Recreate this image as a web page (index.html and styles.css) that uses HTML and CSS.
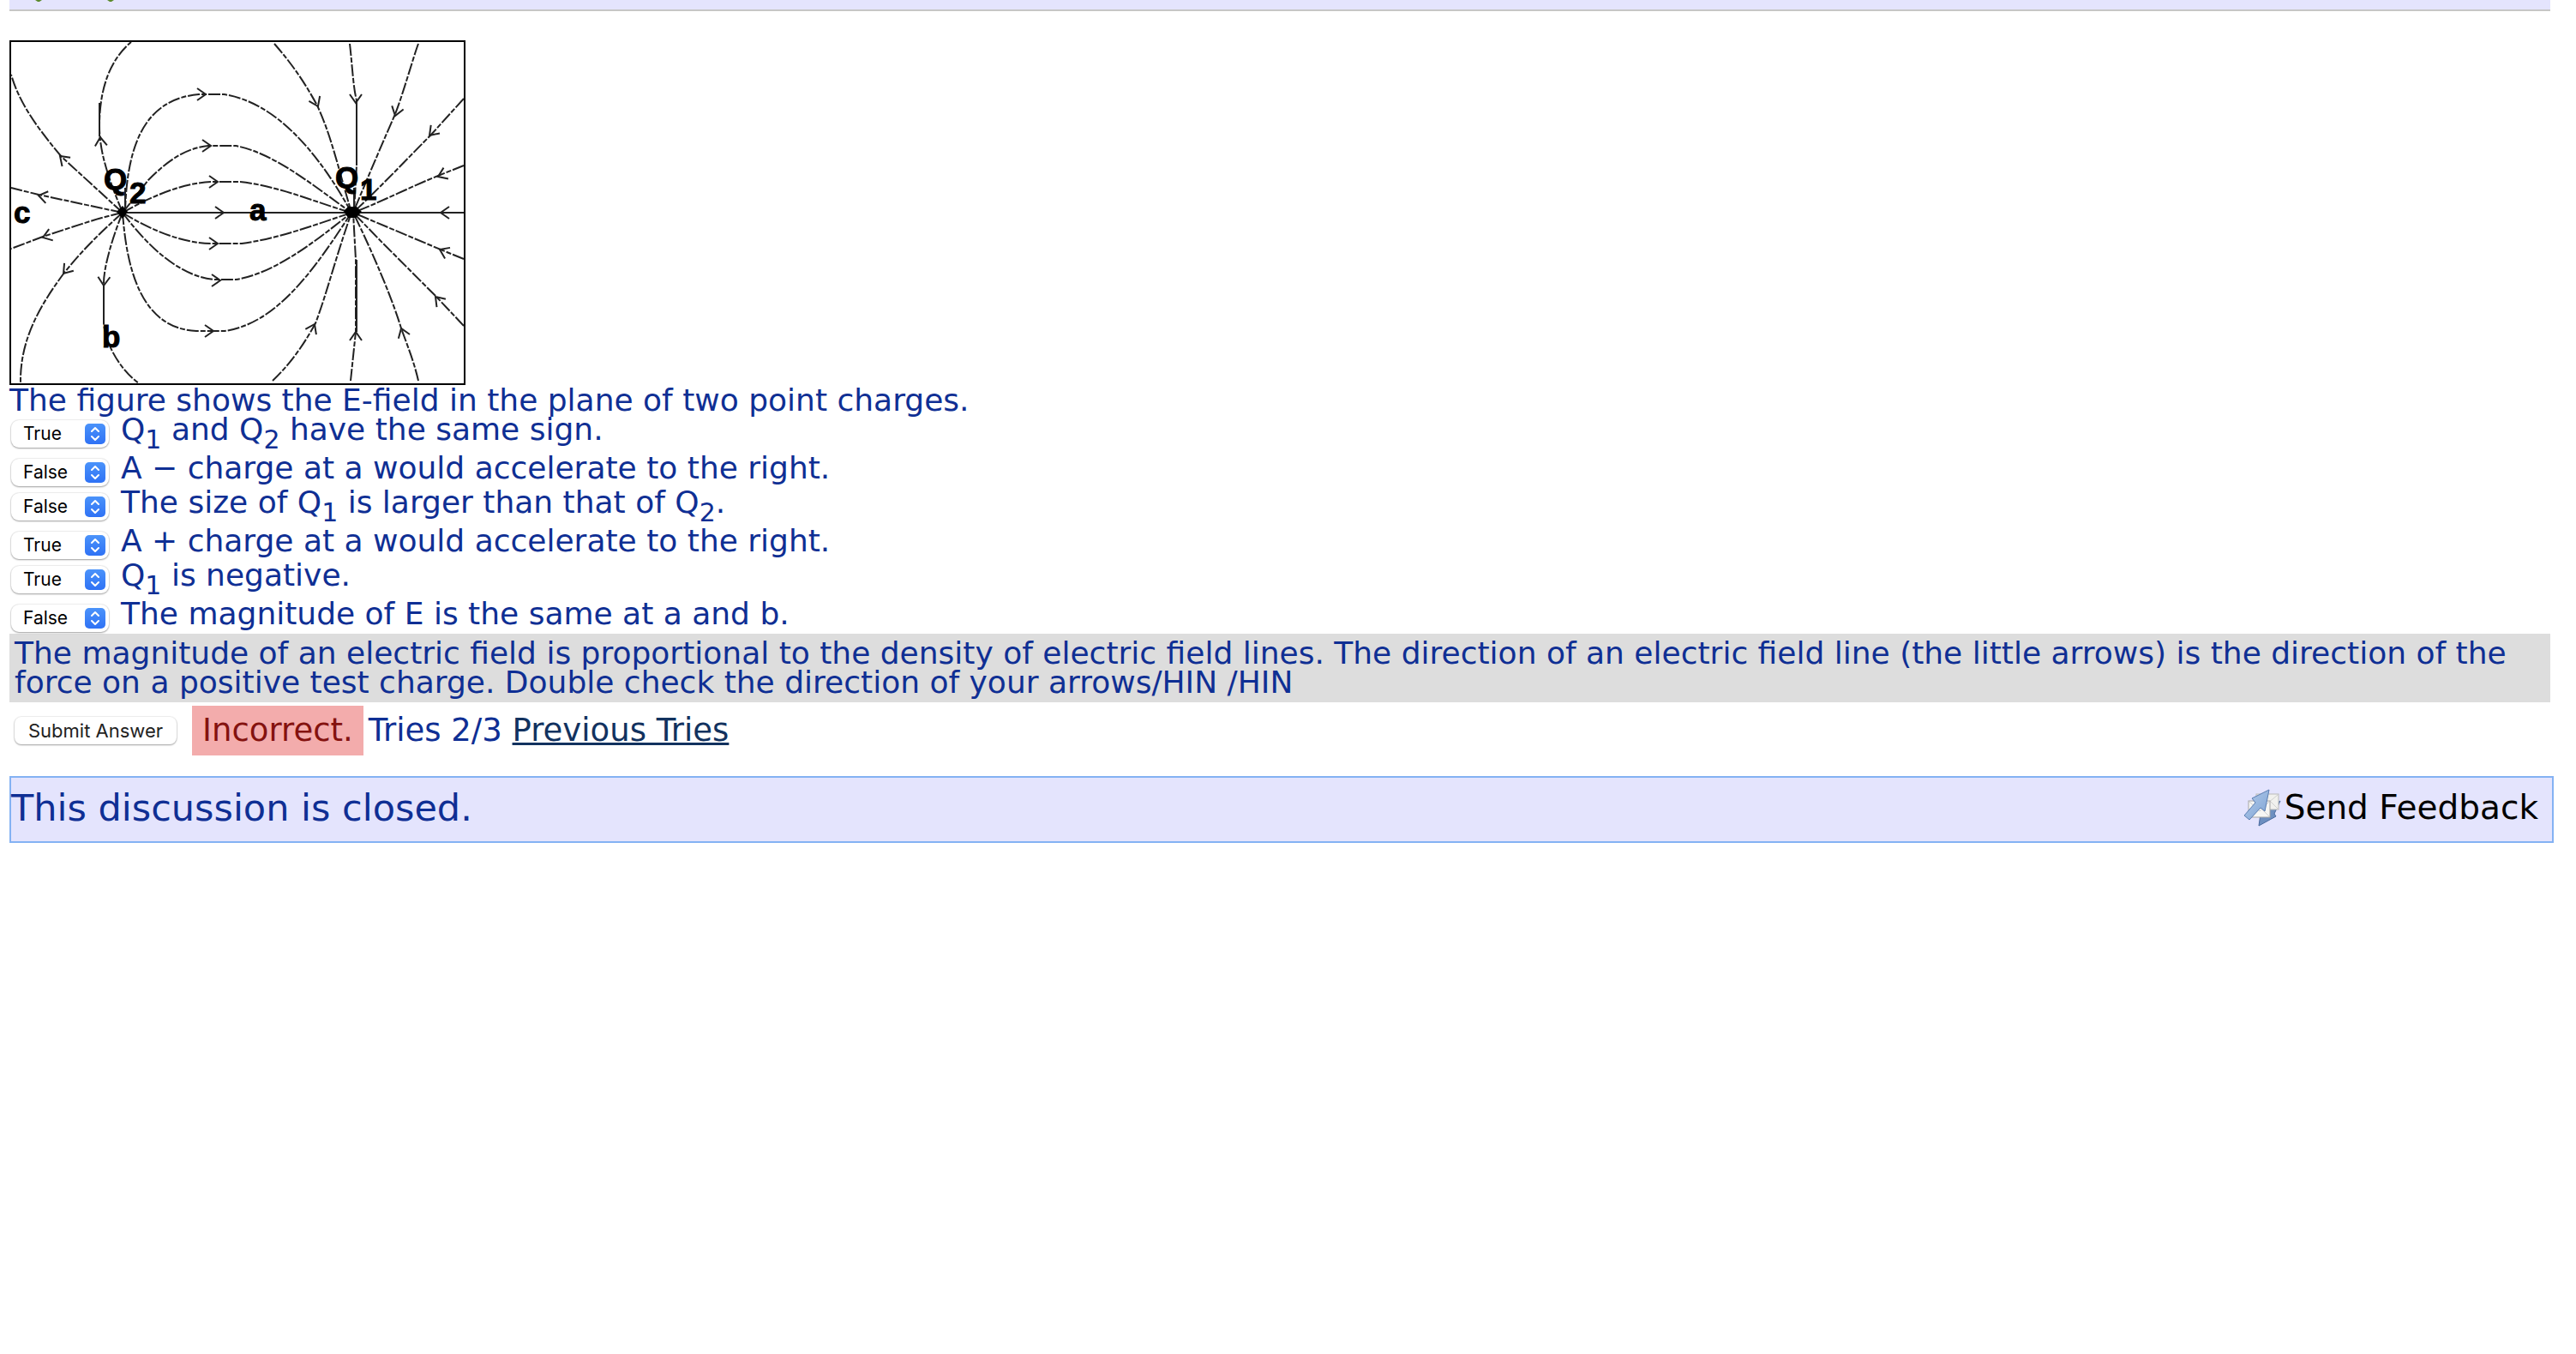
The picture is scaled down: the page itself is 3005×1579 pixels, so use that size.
FILE: index.html
```html
<!DOCTYPE html>
<html lang="en">
<head>
  <meta charset="UTF-8">
  <meta name="viewport" content="width=device-width, initial-scale=1.0">
  <title>E-field of two point charges</title>
  <link rel="stylesheet" href="styles.css">
</head>
<body>
  <div class="toolbar">
    <svg class="toolbar-arrows" width="130" height="3" viewBox="0 0 130 3" aria-hidden="true">
      <path d="M30 0h8l-3 2h-2zM114 0h8l-3 2h-2z" fill="#5b8a2c"/>
    </svg>
  </div>

  <form class="problem">
    <svg class="figure" width="532" height="402" viewBox="0 0 532 402" role="img" aria-label="Electric field lines of two point charges">
      <defs>
        <path id="head" d="M-10 -7L0 0L-10 7"/>
      </defs>
      <rect x="1" y="1" width="530" height="400" fill="#fff" stroke="#000" stroke-width="2"/>
      <!-- field lines leaving Q2 -->
      <g class="line">
        <path d="M132 201C115 160 105 130 105 100C105 55 118 22 142 2"/>
        <path d="M132 201L61 136C35 105 12 75 2 40"/>
        <path d="M132 201L34 180L2 172"/>
        <path d="M132 201C100 208 70 219 39 229L2 243"/>
        <path d="M132 201C105 225 85 245 64 271C35 310 12 350 13 400"/>
        <path d="M132 201C120 230 110 265 110 283V330C112 355 130 385 151 400"/>
      </g>
      <!-- field lines between the charges -->
      <g class="line">
        <path d="M135 201C137 110 165 68 221 63H250C310 72 360 130 399 201"/>
        <path d="M132 201L162 163C185 140 205 126 232 123H264C310 132 355 170 399 201"/>
        <path d="M132 201C165 182 205 165 239 165H269C315 170 360 190 399 201"/>
        <path d="M132 201C165 222 205 237 235 237H271C315 231 360 214 399 201"/>
        <path d="M132 201C155 232 195 276 240 279H264C310 272 360 232 399 201"/>
        <path d="M132 201C137 270 155 336 218 339H251C315 330 360 260 399 201"/>
      </g>
      <!-- field lines ending on Q1 -->
      <g class="line">
        <path d="M309 4C330 28 345 50 359 76C375 110 384 150 399 201"/>
        <path d="M397 4C400 30 401 55 405 70V146L402 201"/>
        <path d="M477 4C471 20 460 60 450 86C436 118 420 155 401 201"/>
        <path d="M530 68L491 111C470 132 440 164 401 201"/>
        <path d="M530 146L500 158C470 170 430 190 401 201"/>
        <path d="M530 255L503 244L401 201"/>
        <path d="M530 333L498 299L435 236L401 201"/>
        <path d="M477 397C472 375 465 358 457 336C448 305 425 250 401 201"/>
        <path d="M398 397L404 340V256L401 201"/>
        <path d="M307 397C330 375 345 352 357 330C370 296 380 255 399 201"/>
      </g>
      <path class="axis" d="M132 201H530M135 172V201M402 172V201M405 70V146M405 256V340M105 73V112M110 286V330"/>
      <g class="heads">
        <use href="#head" transform="translate(229 63)"/>
        <use href="#head" transform="translate(235 123)"/>
        <use href="#head" transform="translate(243 165)"/>
        <use href="#head" transform="translate(250 201)"/>
        <use href="#head" transform="translate(243 237)"/>
        <use href="#head" transform="translate(246 280)"/>
        <use href="#head" transform="translate(238 339)"/>
        <use href="#head" transform="translate(106 113) rotate(-95)"/>
        <use href="#head" transform="translate(59 135) rotate(-137)"/>
        <use href="#head" transform="translate(34 181) rotate(192)"/>
        <use href="#head" transform="translate(39 230) rotate(161)"/>
        <use href="#head" transform="translate(63 272) rotate(130)"/>
        <use href="#head" transform="translate(110 286) rotate(92)"/>
        <use href="#head" transform="translate(360 77) rotate(65)"/>
        <use href="#head" transform="translate(404 73) rotate(90)"/>
        <use href="#head" transform="translate(450 88) rotate(107)"/>
        <use href="#head" transform="translate(490 111) rotate(133)"/>
        <use href="#head" transform="translate(500 159) rotate(157)"/>
        <use href="#head" transform="translate(503 201) rotate(180)"/>
        <use href="#head" transform="translate(502 244) rotate(205)"/>
        <use href="#head" transform="translate(497 299) rotate(228)"/>
        <use href="#head" transform="translate(457 336) rotate(250)"/>
        <use href="#head" transform="translate(404 340) rotate(-90)"/>
        <use href="#head" transform="translate(356 331) rotate(-64)"/>
      </g>
      <path d="M125 200l7-7l6 7l-6 8zM390 199l5-5h10l6 6l-7 7h-9z"/>
      <g class="names">
        <text x="110" y="174">Q</text>
        <text x="140" y="190">2</text>
        <text x="380" y="172">Q</text>
        <text x="409" y="186">1</text>
        <text x="280" y="210">a</text>
        <text x="108" y="358">b</text>
        <text x="5" y="213">c</text>
      </g>
    </svg>

    <p class="question">The figure shows the E-field in the plane of two point charges.</p>

    <div class="row row-sub">
      <select id="s1"><option selected>True</option><option>False</option></select>
      <label for="s1">Q<sub>1</sub> and Q<sub>2</sub> have the same sign.</label>
    </div>
    <div class="row">
      <select id="s2"><option>True</option><option selected>False</option></select>
      <label for="s2">A − charge at a would accelerate to the right.</label>
    </div>
    <div class="row row-sub">
      <select id="s3"><option>True</option><option selected>False</option></select>
      <label for="s3">The size of Q<sub>1</sub> is larger than that of Q<sub>2</sub>.</label>
    </div>
    <div class="row">
      <select id="s4"><option selected>True</option><option>False</option></select>
      <label for="s4">A + charge at a would accelerate to the right.</label>
    </div>
    <div class="row row-sub">
      <select id="s5"><option selected>True</option><option>False</option></select>
      <label for="s5">Q<sub>1</sub> is negative.</label>
    </div>
    <div class="row">
      <select id="s6"><option>True</option><option selected>False</option></select>
      <label for="s6">The magnitude of E is the same at a and b.</label>
    </div>

    <p class="hint">The magnitude of an electric field is proportional to the density of electric field lines. The direction of an electric field line (the little arrows) is the direction of the force on a positive test charge. Double check the direction of your arrows/HIN /HIN</p>

    <div class="status">
      <button type="button" class="submit">Submit Answer</button>
      <span class="incorrect">Incorrect.</span>
      <span class="tries">Tries 2/3 <a href="#">Previous Tries</a></span>
    </div>
  </form>

  <div class="discussion">
    <span>This discussion is closed.</span>
    <a class="feedback" href="#">
      <svg width="44" height="44" viewBox="0 0 44 44" aria-hidden="true">
        <defs>
          <linearGradient id="blue" x1="0" y1="0" x2="1" y2="1">
            <stop offset="0" stop-color="#b4cdec"/>
            <stop offset="1" stop-color="#7da2d3"/>
          </linearGradient>
        </defs>
        <path d="M43 14l-7 15l2 3l-20 11l2-14z" fill="#6d8fc0" stroke="#4a6b9f"/>
        <rect x="15" y="6" width="26" height="18" fill="#f1f1ee" stroke="#b9b9b9"/>
        <path d="M16 23l9-9M40 23l-9-9M16 7l12 10l12-10" fill="none" stroke="#d0d0d0"/>
        <rect x="6" y="14" width="25" height="19" fill="#f6f6f4" stroke="#a5a5a5"/>
        <path d="M7 32l9-9M30 32l-9-9M7 15l12 11l11-11" fill="none" stroke="#d0d0d0"/>
        <path d="M30 1L10 11l4 5L1 31l6 5L20 22l5 4z" fill="url(#blue)" stroke="#5b7eb2"/>
      </svg>
      <span>Send Feedback</span>
    </a>
  </div>
</body>
</html>
```
FILE: styles.css
```css
body {
  margin: 0;
  padding: 0 26px 0 11px;
  background: #fff;
  color: #0f2f94;
  font-family: Verdana, "DejaVu Sans", sans-serif;
  font-size: 36px;
  line-height: 34px;
}
p {
  margin: 0;
}
.toolbar {
  height: 11px;
  margin-right: 4px;
  background: #e4e4fd;
  border-bottom: 2px solid #c6c6c6;
}
.toolbar-arrows {
  display: block;
}
.problem {
  margin: 34px 4px 0 0;
}
.figure {
  display: block;
}
.line {
  fill: none;
  stroke: #222;
  stroke-width: 2;
  stroke-dasharray: 14 2 6 2;
}
.axis,
.heads {
  fill: none;
  stroke: #222;
  stroke-width: 2;
}
.names {
  stroke: #000;
  stroke-width: 1;
  font-family: "Liberation Sans", Arial, sans-serif;
  font-size: 35px;
  font-weight: bold;
}
.question {
  padding-top: 1px;
}
.row {
  display: flex;
  align-items: baseline;
  gap: 14px;
  height: 40px;
}
.row-sub {
  height: 45px;
}
.row sub {
  font-size: 30px;
  line-height: 0;
  vertical-align: -10px;
}
select {
  appearance: none;
  width: 114px;
  height: 32px;
  margin: 0 0 0 2px;
  padding: 0 0 0 14px;
  border: 0;
  border-radius: 9px;
  background: #fff url("data:image/svg+xml,%3Csvg xmlns='http://www.w3.org/2000/svg' width='24' height='24'%3E%3ClinearGradient id='g' x2='0' y2='1'%3E%3Cstop stop-color='%234b93fa'/%3E%3Cstop offset='1' stop-color='%232f72f5'/%3E%3C/linearGradient%3E%3Crect width='24' height='24' rx='5' fill='url(%23g)'/%3E%3Cpath d='M8 9l4-4l4 4M8 15l4 4l4-4' fill='none' stroke='%23fff' stroke-width='2' stroke-linecap='round' stroke-linejoin='round'/%3E%3C/svg%3E") no-repeat right 4px center;
  box-shadow: 0 0 1px 1px #0001, 0 1px 2px #0005;
  color: #000;
  font-family: Inter, sans-serif;
  font-size: 21px;
}
.hint {
  padding: 6px;
  background: #ddd;
}
.status {
  display: flex;
  align-items: center;
  margin-top: 4px;
  padding-left: 6px;
  font-size: 37px;
}
.submit {
  height: 32px;
  padding: 0 16px;
  margin-right: 18px;
  border: 0;
  border-radius: 8px;
  background: #fff;
  box-shadow: 0 0 1px 1px #0001, 0 1px 2px #0005;
  color: #222;
  font-family: Inter, sans-serif;
  font-size: 22px;
}
.incorrect {
  padding: 12px;
  margin-right: 6px;
  background: #f3acac;
  color: #84120f;
}
.tries a {
  color: #12325f;
}
.discussion {
  display: flex;
  justify-content: space-between;
  align-items: center;
  height: 70px;
  margin-top: 24px;
  padding-bottom: 4px;
  border: 2px solid #84b2f3;
  background: #e4e4fd;
  font-size: 43px;
}
.feedback {
  display: flex;
  align-items: center;
  gap: 4px;
  padding-right: 16px;
  color: #000;
  font-size: 39px;
  text-decoration: none;
}
```
